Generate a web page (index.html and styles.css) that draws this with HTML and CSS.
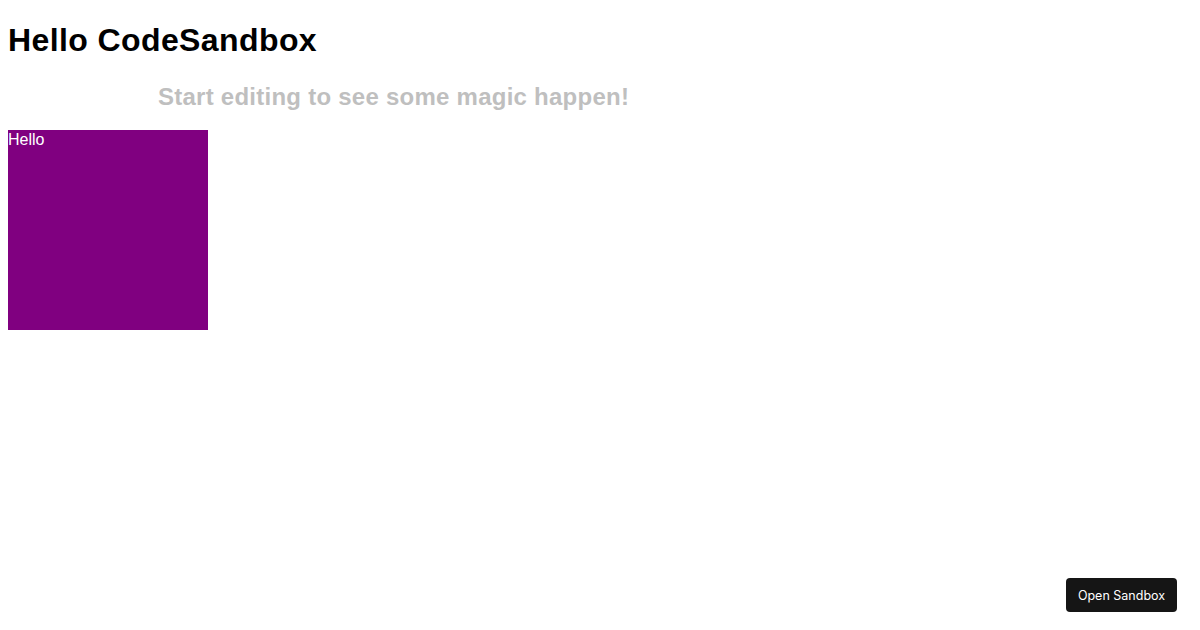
FILE: index.html
```html
<!DOCTYPE html>
<html>
<head>
<meta charset="utf-8">
<link rel="stylesheet" href="styles.css">
</head>
<body>
<div class="app">
  <h1 class="title">Hello CodeSandbox</h1>
  <h2 class="subtitle">Start editing to see some magic happen!</h2>
  <div class="box">Hello</div>
</div>
<a class="open-btn">Open Sandbox</a>
</body>
</html>
```
FILE: styles.css
```css
body {
  margin: 0;
  font-family: "Liberation Sans", Arial, sans-serif;
  background: #fff;
}
.app {
  padding: 8px;
}
.title {
  font-size: 32px;
  line-height: 36px;
  letter-spacing: 0.4px;
  margin: 14px 0 0;
  color: #000;
}
.subtitle {
  font-size: 24px;
  line-height: 28px;
  letter-spacing: 0.25px;
  margin: 25px 0 19px 150px;
  color: #bfbfbf;
}
.box {
  width: 200px;
  height: 200px;
  background: #800080;
  color: #fff;
  font-size: 16px;
  line-height: 19px;
}
.open-btn {
  position: fixed;
  right: 23px;
  bottom: 18px;
  width: 111px;
  height: 34px;
  display: flex;
  align-items: center;
  justify-content: center;
  background: #151515;
  color: #fff;
  border-radius: 4px;
  font-family: Inter, "Liberation Sans", sans-serif;
  font-size: 12.5px;
}
```
